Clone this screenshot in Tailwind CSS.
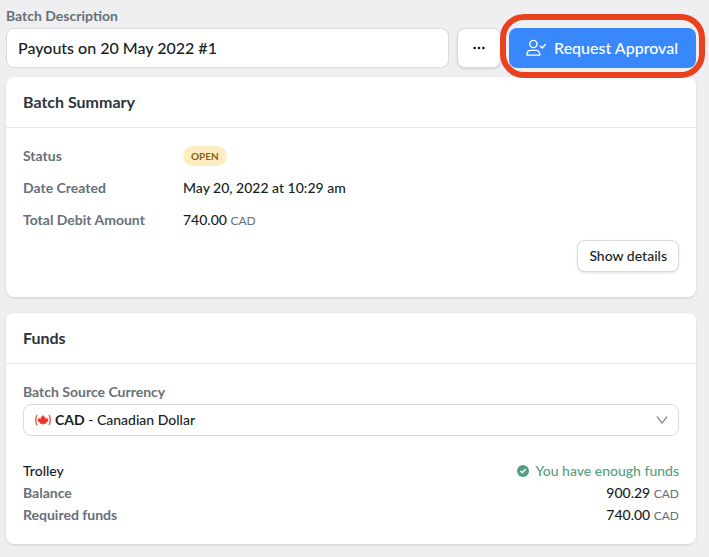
<!DOCTYPE html>
<html lang="en">

<head>
  <meta charset="UTF-8">
  <meta name="viewport" content="width=device-width, initial-scale=1.0">
  <title>Payout Batch</title>
  <script src="https://cdn.jsdelivr.net/npm/@tailwindcss/browser@4"></script>
</head>

<body class="min-h-screen bg-[#efeff2] font-['Lato',sans-serif] text-sm text-[#161d25]">
  <main class="flex flex-col pt-2 pr-[13px] pb-3 pl-1.5">

    <!-- Description and actions -->
    <label for="description" class="font-bold leading-4 text-[#687078]">Batch Description</label>
    <div class="mt-1 flex gap-2">
      <input id="description" type="text" value="Payouts on 20 May 2022 #1" class="h-10 min-w-0 flex-1 rounded-lg border border-[#d9dcdd] bg-white px-[11px] pb-0.5 text-base font-medium">
      <button type="button" aria-label="More actions" class="flex h-10 w-11 items-center justify-center rounded-lg border border-[#d9dcdd] bg-white shadow-sm">
        <svg class="h-1 w-3" viewBox="0 0 12 4" fill="currentColor">
          <circle cx="1.6" cy="2" r="1.3" />
          <circle cx="6" cy="2" r="1.3" />
          <circle cx="10.4" cy="2" r="1.3" />
        </svg>
      </button>
      <div class="relative">
        <button type="button" class="flex h-10 items-center gap-2 rounded-lg bg-[#3888fb] pr-[18px] pl-[17px] text-base font-medium text-white">
          <svg class="h-5 w-5" viewBox="0 0 20 20" fill="none" stroke="currentColor" stroke-width="1.4" stroke-linecap="round" stroke-linejoin="round">
            <circle cx="7.4" cy="6" r="3.6" />
            <path d="M.9 17.1c0-3 1.300-4.700 3.600-4.700h5.700c2.300 0 3.600 1.700 3.600 4.700z" />
            <path d="M14.500 8.300l1.700 1.700 3.300-3.600" />
          </svg>
          Request Approval
        </button>
        <!-- Highlight ring -->
        <div class="pointer-events-none absolute -inset-x-[9px] -top-3.5 -bottom-2.5 rounded-[24px] border-[6px] border-[#e9401d]"></div>
      </div>
    </div>

    <!-- Batch summary -->
    <section class="mt-[9px] rounded-lg bg-white shadow-sm">
      <h2 class="border-b border-[#e3e5e7] px-[17px] py-[13px] text-base font-bold leading-6 text-[#2d343c]">Batch Summary</h2>
      <div class="flex flex-col px-[17px] pt-3 pb-[25px]">
        <dl class="grid grid-cols-[160px_1fr] items-center leading-8">
          <dt class="font-bold text-[#687078]">Status</dt>
          <dd class="flex"><span class="rounded-full bg-[#ffedc2] px-2 text-[10px] font-bold leading-5 text-[#86640f]">OPEN</span></dd>
          <dt class="font-bold text-[#687078]">Date Created</dt>
          <dd class="font-medium">May 20, 2022 at 10:29 am</dd>
          <dt class="font-bold text-[#687078]">Total Debit Amount</dt>
          <dd class="font-medium">740.00 <span class="text-xs font-normal text-[#687078]">CAD</span></dd>
        </dl>
        <button type="button" class="mt-1 h-8 self-end rounded-lg border border-[#d9dcdd] bg-white px-[11px] font-medium shadow-sm">Show details</button>
      </div>
    </section>

    <!-- Funds -->
    <section class="mt-4 rounded-lg bg-white shadow-sm">
      <h2 class="border-b border-[#e3e5e7] px-[17px] py-[13px] text-base font-bold leading-6 text-[#2d343c]">Funds</h2>
      <div class="px-[17px] pt-5 pb-[18px]">
        <label for="currency" class="block font-bold leading-4 text-[#687078]">Batch Source Currency</label>
        <div class="mt-1 grid">
          <select id="currency" class="col-start-1 row-start-1 h-8 appearance-none rounded-lg border border-[#d9dcdd] bg-white px-[11px] text-transparent">
            <option value="CAD" class="text-[#161d25]">CAD - Canadian Dollar</option>
          </select>
          <div aria-hidden="true" class="pointer-events-none col-start-1 row-start-1 flex items-center gap-1 pr-[11px] pl-3">
            <svg class="h-3 w-4" viewBox="0 0 16 12" fill="#ee3524">
              <path d="M1.700.5C-.3 3.500-.3 8.500 1.700 11.500l.7-.4C1 8 1 4 2.400.9z" />
              <path d="M14.300.5c2 3 2 8 0 11l-.7-.4c1.400-3.100 1.400-7.100 0-10.200z" />
              <path d="M8 .8L6.900 2.900 5.600 2.300l.5 2.900-1.500-1.500-.4 1-1.700-.2.700 1.900-.7.500 2.900 2.200-.2.900 2.500-.3v1.500h.6V9.700l2.500.3-.2-.9 2.900-2.200-.7-.5.7-1.900-1.700.2-.4-1-1.500 1.500.5-2.900-1.300.6z" />
            </svg>
            <span class="font-medium"><b>CAD</b> - Canadian Dollar</span>
            <svg class="ml-auto h-3 w-3 text-[#7c8389]" viewBox="0 0 12 12" fill="none" stroke="currentColor" stroke-width="1.2" stroke-linecap="round" stroke-linejoin="round">
              <path d="M1.200 2.800L6 9.200l4.800-6.400" />
            </svg>
          </div>
        </div>

        <div class="mt-6 flex items-center justify-between leading-[22px]">
          <span class="font-medium">Trolley</span>
          <span class="flex items-center gap-1.5 font-medium text-[#559f80]">
            <svg class="h-3 w-3" viewBox="0 0 12 12">
              <circle cx="6" cy="6" r="6" fill="#559f80" />
              <path d="M3.700 6.200l1.600 1.600 3-3.300" fill="none" stroke="#fff" stroke-width="1.5" stroke-linecap="round" stroke-linejoin="round" />
            </svg>
            You have enough funds
          </span>
        </div>
        <dl class="grid grid-cols-[1fr_auto] leading-[22px]">
          <dt class="font-bold text-[#687078]">Balance</dt>
          <dd class="text-right font-medium">900.29 <span class="text-xs font-normal text-[#687078]">CAD</span></dd>
          <dt class="font-bold text-[#687078]">Required funds</dt>
          <dd class="text-right font-medium">740.00 <span class="text-xs font-normal text-[#687078]">CAD</span></dd>
        </dl>
      </div>
    </section>

  </main>
</body>

</html>
